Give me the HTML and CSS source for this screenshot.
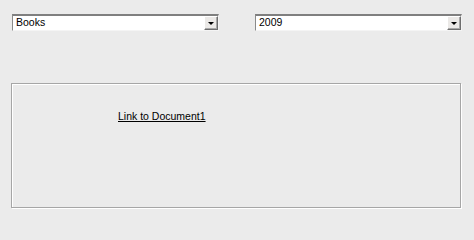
FILE: index.html
```html
<!DOCTYPE html>
<html>
<head>
<meta charset="utf-8">
<link rel="stylesheet" href="styles.css">
</head>
<body>
<div class="page">
  <div class="combos">
    <div class="combo">
      <span class="combo-text">Books</span>
      <span class="combo-btn"><span class="arrow"></span></span>
    </div>
    <div class="combo">
      <span class="combo-text">2009</span>
      <span class="combo-btn"><span class="arrow"></span></span>
    </div>
  </div>
  <div class="panel">
    <a class="doc-link" href="#">Link to Document1</a>
  </div>
</div>
</body>
</html>
```
FILE: styles.css
```css
html, body {
  margin: 0;
  padding: 0;
  background: #ebebeb;
  font-family: "Liberation Sans", Arial, sans-serif;
  font-size: 10.5px;
  color: #000;
}
.page {
  width: 474px;
  height: 223px;
  padding: 14px 0 0 11px;
  box-sizing: border-box;
}
.combos {
  display: flex;
  gap: 36px;
  padding-left: 1px;
}
.combo {
  width: 207px;
  height: 17px;
  box-sizing: border-box;
  display: flex;
  align-items: stretch;
  background: #fff;
  border-top: 2px solid #7f7f7f;
  border-left: 1px solid #8a8a8a;
  border-right: 1px solid #f4f4f4;
  border-bottom: 1px solid #f4f4f4;
}
.combo-text {
  flex: 1;
  padding-left: 3px;
  line-height: 13px;
}
.combo-btn {
  width: 14px;
  box-sizing: border-box;
  background: #ebe9e7;
  border-top: 1px solid #ffffff;
  border-left: 1px solid #ffffff;
  border-right: 1px solid #6e6e6e;
  border-bottom: 1px solid #6e6e6e;
  box-shadow: inset -1px -1px 0 #a8a8a8;
  display: flex;
  align-items: center;
  justify-content: center;
}
.arrow {
  width: 0;
  height: 0;
  border-left: 3px solid transparent;
  border-right: 3px solid transparent;
  border-top: 3px solid #000;
  margin-top: 1px;
}
.panel {
  margin-top: 52px;
  width: 450px;
  height: 125px;
  box-sizing: border-box;
  border: 1px solid #a6a6a6;
  box-shadow: inset 1px 1px 0 #ffffff, 1px 1px 0 #ffffff;
  padding: 26px 0 0 106px;
}
.doc-link {
  color: #000;
  text-decoration: underline;
  line-height: 13px;
  display: inline-block;
}
```
